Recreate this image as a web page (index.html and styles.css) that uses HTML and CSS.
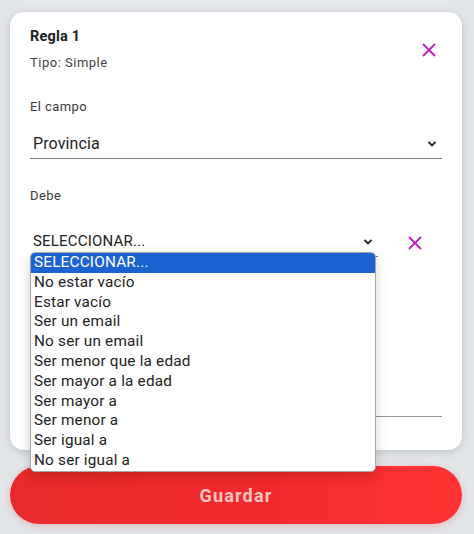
FILE: index.html
```html
<!DOCTYPE html>
<html lang="es">
<head>
<meta charset="utf-8">
<link rel="stylesheet" href="styles.css">
</head>
<body>
<div class="page">
  <div class="card">
    <div class="header">
      <div class="titles">
        <div class="title">Regla 1</div>
        <div class="subtitle">Tipo: Simple</div>
      </div>
      <svg class="close" width="14" height="14" viewBox="0 0 14 14"><path d="M1 1L13 13M13 1L1 13" stroke="#c21fc2" stroke-width="1.8" fill="none"/></svg>
    </div>

    <div class="label label-first">El campo</div>
    <div class="select">
      <span>Provincia</span>
      <svg class="chev" width="10" height="6" viewBox="0 0 10 6"><path d="M1.5 1L5 4.5L8.5 1" stroke="#222" stroke-width="1.8" fill="none"/></svg>
    </div>

    <div class="label label-second">Debe</div>
    <div class="row">
      <div class="select select-narrow">
        <span>SELECCIONAR...</span>
        <svg class="chev" width="10" height="6" viewBox="0 0 10 6"><path d="M1.5 1L5 4.5L8.5 1" stroke="#222" stroke-width="1.8" fill="none"/></svg>
        <ul class="menu">
          <li class="active">SELECCIONAR...</li>
          <li>No estar vacío</li>
          <li>Estar vacío</li>
          <li>Ser un email</li>
          <li>No ser un email</li>
          <li>Ser menor que la edad</li>
          <li>Ser mayor a la edad</li>
          <li>Ser mayor a</li>
          <li>Ser menor a</li>
          <li>Ser igual a</li>
          <li>No ser igual a</li>
        </ul>
      </div>
      <svg class="close close-row" width="14" height="14" viewBox="0 0 14 14"><path d="M1 1L13 13M13 1L1 13" stroke="#c21fc2" stroke-width="1.8" fill="none"/></svg>
    </div>

    <div class="input"></div>
  </div>

  <button class="save">Guardar</button>
</div>
</body>
</html>
```

FILE: styles.css
```css
* { box-sizing: border-box; }
html, body { margin: 0; padding: 0; }
body {
  background: #e4e7ea;
  font-family: Roboto, "Liberation Sans", sans-serif;
  color: #222;
  width: 474px;
  height: 534px;
  overflow: hidden;
}
.page {
  padding: 12px 12px 0 10px;
}
.card {
  background: #fff;
  border-radius: 14px;
  height: 438px;
  padding: 16px 20px 0 20px;
  box-shadow: 0 2px 10px rgba(120, 130, 140, 0.35);
}
.header {
  display: flex;
  align-items: center;
  justify-content: space-between;
}
.title {
  font-size: 14.5px;
  font-weight: 700;
  line-height: 18px;
  color: #1d1d1d;
  letter-spacing: 0.2px;
}
.subtitle {
  margin-top: 9px;
  font-size: 13px;
  line-height: 16px;
  color: #444;
  letter-spacing: 0.5px;
}
.close {
  margin-right: 6px;
  margin-top: 0;
}
.label {
  font-size: 13px;
  line-height: 16px;
  color: #3a3a3a;
  letter-spacing: 0.4px;
}
.label-first { margin-top: 28px; }
.label-second { margin-top: 29px; }
.select {
  position: relative;
  margin-top: 13px;
  height: 31px;
  border-bottom: 1px solid #777;
  display: flex;
  align-items: center;
  justify-content: space-between;
  padding: 0 5px 0 3px;
  font-size: 16px;
  color: #222;
  letter-spacing: 0.1px;
}
.select .chev { margin-top: 1px; }
.row {
  display: flex;
  align-items: center;
  gap: 30px;
  margin-top: 22px;
}
.row .select {
  margin-top: 0;
  flex: 0 0 348px;
  font-size: 15px;
  letter-spacing: 0.2px;
}
.close-row { margin-top: 2px; }
.menu {
  position: absolute;
  left: 0;
  top: 26px;
  width: 346px;
  margin: 0;
  padding: 0;
  list-style: none;
  background: #fff;
  border: 1px solid #a5a5a5;
  border-radius: 5px;
  overflow: hidden;
  box-shadow: 0 4px 12px rgba(0, 0, 0, 0.18);
  z-index: 2;
}
.menu li {
  height: 19.8px;
  line-height: 19.8px;
  padding-left: 3px;
  font-size: 15.3px;
  color: #222;
  white-space: nowrap;
  letter-spacing: 0.2px;
}
.menu li.active {
  background: #1b63d1;
  color: #fff;
}
.input {
  margin-top: 159px;
  height: 1px;
  border-bottom: 1px solid #999;
}
.save {
  display: block;
  width: 452px;
  height: 58px;
  margin-top: 16px;
  border: none;
  border-radius: 29px;
  background: linear-gradient(90deg, #e8292b 0%, #f42a2d 60%, #ff3334 100%);
  color: #f7c3c3;
  font-family: Roboto, "Liberation Sans", sans-serif;
  font-size: 18px;
  font-weight: 700;
  letter-spacing: 1.2px;
  box-shadow: 0 2px 8px rgba(200, 40, 40, 0.25);
}
```
